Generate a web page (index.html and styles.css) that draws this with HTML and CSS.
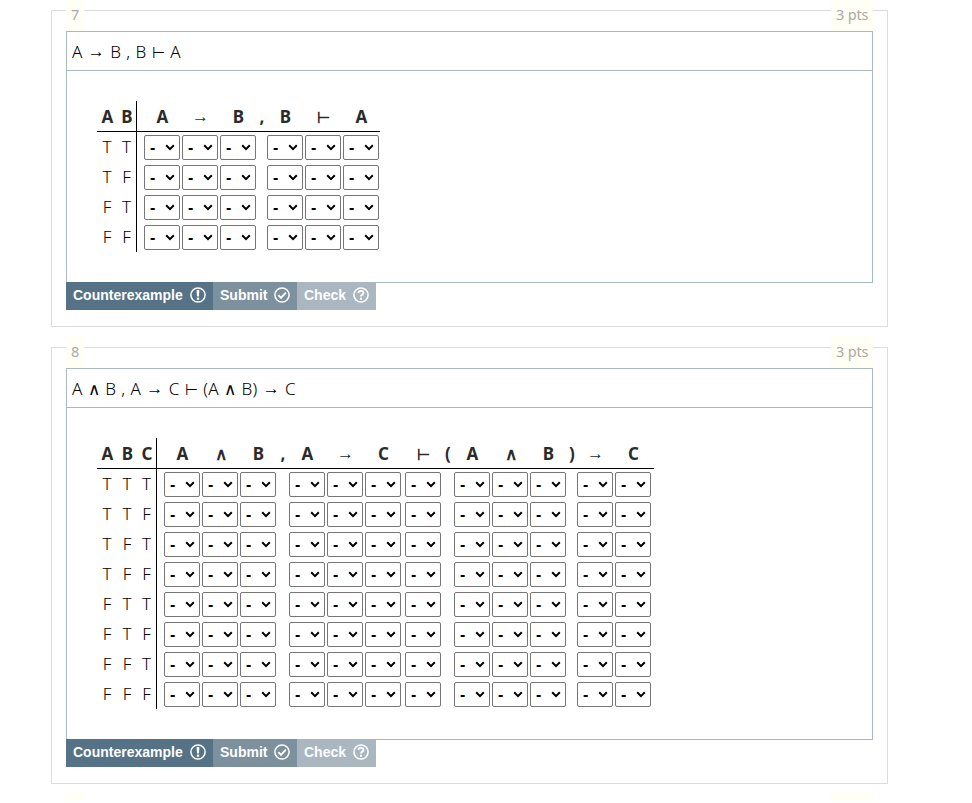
FILE: index.html
```html
<!DOCTYPE html>
<html lang="en">
<head>
<meta charset="utf-8">
<title>Truth tables</title>
<link rel="stylesheet" href="styles.css">
</head>
<body>
<svg class="sprite" aria-hidden="true">
  <symbol id="i-bang" viewBox="0 0 16 16"><circle cx="8" cy="8" r="7.1"/><path d="M6.6 3h2.8L9 9.6H7z" class="solid"/><path d="M6.8 10.6h2.4v2.2H6.8z" class="solid"/></symbol>
  <symbol id="i-tick" viewBox="0 0 16 16"><circle cx="8" cy="8" r="7.1"/><path d="M4.3 8.2l2.7 2.7 4.9-5.3" class="thick"/></symbol>
  <symbol id="i-ask" viewBox="0 0 16 16"><circle cx="8" cy="8" r="7.1"/><path d="M5.5 6.1C5.5 3.1 10.5 3.1 10.5 6c0 1.6-2.5 1.7-2.5 3.4" class="thick"/><path d="M7 10.8h2v2H7z" class="solid"/></symbol>
</svg>
<main class="problems">
  <section class="problem">
    <div class="legend"><span class="tag">7</span><span class="tag pts">3 pts</span></div>
    <div class="box">
      <div class="statement">A <span class="arrow">→</span> B , B <span class="turnstile">⊢</span> A</div>
      <div class="work"><div class="truth two" data-letters="AB" data-formula="A → B , B ⊢ A"></div></div>
    </div>
    <div class="actions">
      <button class="counter">Counterexample<svg><use href="#i-bang"/></svg></button><button class="submit">Submit<svg><use href="#i-tick"/></svg></button><button class="check">Check<svg><use href="#i-ask"/></svg></button>
    </div>
  </section>
  <section class="problem">
    <div class="legend"><span class="tag">8</span><span class="tag pts">3 pts</span></div>
    <div class="box">
      <div class="statement">A ∧ B , A <span class="arrow">→</span> C <span class="turnstile">⊢</span> (A ∧ B) <span class="arrow">→</span> C</div>
      <div class="work"><div class="truth three" data-letters="ABC" data-formula="A ∧ B , A → C ⊢ ( A ∧ B ) → C"></div></div>
    </div>
    <div class="actions">
      <button class="counter">Counterexample<svg><use href="#i-bang"/></svg></button><button class="submit">Submit<svg><use href="#i-tick"/></svg></button><button class="check">Check<svg><use href="#i-ask"/></svg></button>
    </div>
  </section>
  <div class="legend next"><span class="tag"></span><span class="tag pts"></span></div>
</main>
<script src="app.js"></script>
</body>
</html>
```
FILE: styles.css
```css
* { box-sizing: border-box; }
html, body { height: 100%; }
body {
  margin: 0;
  overflow: hidden;
  background: #fff;
  color: #2b2b2b;
  font: 17px/24px "Noto Sans", sans-serif;
}
.sprite { display: none; }
.problems { width: 837px; padding-top: 10px; margin-left: 51px; }
.problem {
  border: 1px solid #ddd;
  padding: 0 14px 16px;
  margin-bottom: 20px;
}
.legend {
  display: flex;
  justify-content: space-between;
  height: 32px;
  margin-top: -12px;
}
.tag {
  width: 18px;
  padding: 5px 4px 0 5px;
  background: #fffff5;
  color: #aaa;
  font-size: 14.5px;
  line-height: 21px;
  letter-spacing: -0.2px;
  white-space: nowrap;
}
.pts { width: 42px; }
.legend.next { height: 10px; margin: -12px 15px 0; }
.box { border: 1px solid #a9b8c3; }
.statement {
  height: 39px;
  padding: 8px 5px 0;
  border-bottom: 1px solid #a9b8c3;
  color: #000;
  font-weight: 300;
  letter-spacing: 0.3px;
  word-spacing: 0.4px;
}
.arrow { line-height: 0; vertical-align: 1px; }
.turnstile { font-size: 15px; line-height: 0; }
.work { padding: 30px; }
.truth { display: grid; width: max-content; }
.two { grid-template-columns: 20px 20px 6px repeat(3, 38px) 9px repeat(3, 38px); }
.three { grid-template-columns: repeat(3, 20px) 6px repeat(3, 38px) 11px repeat(3, 38px) 40px 11px repeat(3, 38px) 9px 38px 40px; }
.truth > div {
  height: 30px;
  display: flex;
  align-items: center;
  justify-content: center;
}
.truth > .head { height: 31px; padding: 2px 0 0 1px; border-bottom: 1px solid #000; font-weight: 700; }
.truth > .head-arrow { padding: 0 0 1px 1px; }
.truth > .head-turnstile { font-size: 15px; }
.truth > .edge { border-right: 1px solid #000; }
.truth > .wide { padding-left: 2px; }
.truth > .last { padding-right: 2px; }
.truth > .value { color: #000; font-weight: 300; }
select {
  appearance: none;
  width: 36px;
  height: 25px;
  margin: 1px 0 0;
  padding: 0 0 0 5px;
  border: 1px solid #767676;
  border-radius: 2px;
  background: #fff url("data:image/svg+xml,%3Csvg xmlns='http://www.w3.org/2000/svg' width='10' height='7'%3E%3Cpath d='M1.2 1.3L5 5.1l3.8-3.8' fill='none' stroke='black' stroke-width='2'/%3E%3C/svg%3E") 20px 8px no-repeat;
  color: #000;
  font: bold 16px "Liberation Sans", sans-serif;
}
.actions { display: flex; margin-top: -1px; }
button {
  display: flex;
  align-items: center;
  justify-content: space-between;
  height: 28px;
  margin: 0;
  padding: 0 7px 2px;
  border: 0;
  color: #fff;
  font: bold 14px "Liberation Sans", sans-serif;
}
button svg {
  width: 16px;
  height: 16px;
  fill: none;
  stroke: #fff;
  stroke-width: 1.5;
}
.solid { fill: #fff; stroke: none; }
.thick { stroke-width: 1.9; }
.counter { width: 147px; background: #557286; }
.submit { width: 84px; background: #7c909e; }
.check { width: 79px; background: #aab7c0; }
```
FILE: app.js
```js
document.querySelectorAll('.truth').forEach(function (table) {
  var letters = table.dataset.letters.split('');
  var symbols = table.dataset.formula.split(' ');
  var n = letters.length;
  var headClass = { '→': ' head-arrow', '⊢': ' head-turnstile' };

  function cell(cls, content) {
    var el = document.createElement('div');
    el.className = cls;
    el.append(content);
    table.append(el);
  }
  function extra(i) {
    return (symbols[i] === '⊢' && n === 3 ? ' wide' : '') +
      (i === symbols.length - 1 && n === 3 ? ' last' : '');
  }

  letters.forEach(function (l, i) { cell('head' + (i === n - 1 ? ' edge' : ''), l); });
  cell('head', '');
  symbols.forEach(function (s, i) { cell('head' + (headClass[s] || '') + extra(i), s); });

  for (var row = 0; row < 1 << n; row++) {
    letters.forEach(function (l, i) {
      var on = !(row >> (n - 1 - i) & 1);
      cell('value' + (i === n - 1 ? ' edge' : ''), on ? 'T' : 'F');
    });
    cell('', '');
    symbols.forEach(function (s, i) {
      if (',()'.includes(s)) { cell('', ''); return; }
      var select = document.createElement('select');
      ['-', 'T', 'F'].forEach(function (v) { select.add(new Option(v)); });
      cell('pick' + extra(i), select);
    });
  }
});
```
